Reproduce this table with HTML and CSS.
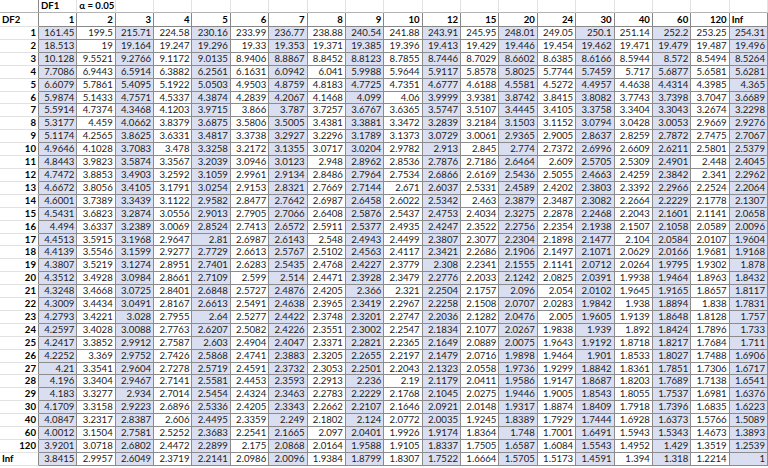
FILE: index.html
```html
<!DOCTYPE html>
<html>
<head>
<meta charset="utf-8">
<link rel="stylesheet" href="styles.css">
</head>
<body>
<div class="sheet">
<div class="row top"><div class="lb"></div><div class="tl">DF1</div><div class="tl">α = 0.05</div><div></div><div></div><div></div><div></div><div></div><div></div><div></div><div></div><div></div><div></div><div></div><div></div><div></div><div></div><div></div><div></div><div></div></div>
<div class="row hd"><div class="lb tl">DF2</div><div>1</div><div>2</div><div>3</div><div>4</div><div>5</div><div>6</div><div>7</div><div>8</div><div>9</div><div>10</div><div>12</div><div>15</div><div>20</div><div>24</div><div>30</div><div>40</div><div>60</div><div>120</div><div class="tl">Inf</div></div>
<div class="row d"><div class="lb">1</div><div>161.45</div><div>199.5</div><div>215.71</div><div>224.58</div><div>230.16</div><div>233.99</div><div>236.77</div><div>238.88</div><div>240.54</div><div>241.88</div><div>243.91</div><div>245.95</div><div>248.01</div><div>249.05</div><div>250.1</div><div>251.14</div><div>252.2</div><div>253.25</div><div>254.31</div></div>
<div class="row d"><div class="lb">2</div><div>18.513</div><div>19</div><div>19.164</div><div>19.247</div><div>19.296</div><div>19.33</div><div>19.353</div><div>19.371</div><div>19.385</div><div>19.396</div><div>19.413</div><div>19.429</div><div>19.446</div><div>19.454</div><div>19.462</div><div>19.471</div><div>19.479</div><div>19.487</div><div>19.496</div></div>
<div class="row d"><div class="lb">3</div><div>10.128</div><div>9.5521</div><div>9.2766</div><div>9.1172</div><div>9.0135</div><div>8.9406</div><div>8.8867</div><div>8.8452</div><div>8.8123</div><div>8.7855</div><div>8.7446</div><div>8.7029</div><div>8.6602</div><div>8.6385</div><div>8.6166</div><div>8.5944</div><div>8.572</div><div>8.5494</div><div>8.5264</div></div>
<div class="row d"><div class="lb">4</div><div>7.7086</div><div>6.9443</div><div>6.5914</div><div>6.3882</div><div>6.2561</div><div>6.1631</div><div>6.0942</div><div>6.041</div><div>5.9988</div><div>5.9644</div><div>5.9117</div><div>5.8578</div><div>5.8025</div><div>5.7744</div><div>5.7459</div><div>5.717</div><div>5.6877</div><div>5.6581</div><div>5.6281</div></div>
<div class="row d"><div class="lb">5</div><div>6.6079</div><div>5.7861</div><div>5.4095</div><div>5.1922</div><div>5.0503</div><div>4.9503</div><div>4.8759</div><div>4.8183</div><div>4.7725</div><div>4.7351</div><div>4.6777</div><div>4.6188</div><div>4.5581</div><div>4.5272</div><div>4.4957</div><div>4.4638</div><div>4.4314</div><div>4.3985</div><div>4.365</div></div>
<div class="row d"><div class="lb">6</div><div>5.9874</div><div>5.1433</div><div>4.7571</div><div>4.5337</div><div>4.3874</div><div>4.2839</div><div>4.2067</div><div>4.1468</div><div>4.099</div><div>4.06</div><div>3.9999</div><div>3.9381</div><div>3.8742</div><div>3.8415</div><div>3.8082</div><div>3.7743</div><div>3.7398</div><div>3.7047</div><div>3.6689</div></div>
<div class="row d"><div class="lb">7</div><div>5.5914</div><div>4.7374</div><div>4.3468</div><div>4.1203</div><div>3.9715</div><div>3.866</div><div>3.787</div><div>3.7257</div><div>3.6767</div><div>3.6365</div><div>3.5747</div><div>3.5107</div><div>3.4445</div><div>3.4105</div><div>3.3758</div><div>3.3404</div><div>3.3043</div><div>3.2674</div><div>3.2298</div></div>
<div class="row d"><div class="lb">8</div><div>5.3177</div><div>4.459</div><div>4.0662</div><div>3.8379</div><div>3.6875</div><div>3.5806</div><div>3.5005</div><div>3.4381</div><div>3.3881</div><div>3.3472</div><div>3.2839</div><div>3.2184</div><div>3.1503</div><div>3.1152</div><div>3.0794</div><div>3.0428</div><div>3.0053</div><div>2.9669</div><div>2.9276</div></div>
<div class="row d"><div class="lb">9</div><div>5.1174</div><div>4.2565</div><div>3.8625</div><div>3.6331</div><div>3.4817</div><div>3.3738</div><div>3.2927</div><div>3.2296</div><div>3.1789</div><div>3.1373</div><div>3.0729</div><div>3.0061</div><div>2.9365</div><div>2.9005</div><div>2.8637</div><div>2.8259</div><div>2.7872</div><div>2.7475</div><div>2.7067</div></div>
<div class="row d"><div class="lb">10</div><div>4.9646</div><div>4.1028</div><div>3.7083</div><div>3.478</div><div>3.3258</div><div>3.2172</div><div>3.1355</div><div>3.0717</div><div>3.0204</div><div>2.9782</div><div>2.913</div><div>2.845</div><div>2.774</div><div>2.7372</div><div>2.6996</div><div>2.6609</div><div>2.6211</div><div>2.5801</div><div>2.5379</div></div>
<div class="row d"><div class="lb">11</div><div>4.8443</div><div>3.9823</div><div>3.5874</div><div>3.3567</div><div>3.2039</div><div>3.0946</div><div>3.0123</div><div>2.948</div><div>2.8962</div><div>2.8536</div><div>2.7876</div><div>2.7186</div><div>2.6464</div><div>2.609</div><div>2.5705</div><div>2.5309</div><div>2.4901</div><div>2.448</div><div>2.4045</div></div>
<div class="row d"><div class="lb">12</div><div>4.7472</div><div>3.8853</div><div>3.4903</div><div>3.2592</div><div>3.1059</div><div>2.9961</div><div>2.9134</div><div>2.8486</div><div>2.7964</div><div>2.7534</div><div>2.6866</div><div>2.6169</div><div>2.5436</div><div>2.5055</div><div>2.4663</div><div>2.4259</div><div>2.3842</div><div>2.341</div><div>2.2962</div></div>
<div class="row d"><div class="lb">13</div><div>4.6672</div><div>3.8056</div><div>3.4105</div><div>3.1791</div><div>3.0254</div><div>2.9153</div><div>2.8321</div><div>2.7669</div><div>2.7144</div><div>2.671</div><div>2.6037</div><div>2.5331</div><div>2.4589</div><div>2.4202</div><div>2.3803</div><div>2.3392</div><div>2.2966</div><div>2.2524</div><div>2.2064</div></div>
<div class="row d"><div class="lb">14</div><div>4.6001</div><div>3.7389</div><div>3.3439</div><div>3.1122</div><div>2.9582</div><div>2.8477</div><div>2.7642</div><div>2.6987</div><div>2.6458</div><div>2.6022</div><div>2.5342</div><div>2.463</div><div>2.3879</div><div>2.3487</div><div>2.3082</div><div>2.2664</div><div>2.2229</div><div>2.1778</div><div>2.1307</div></div>
<div class="row d"><div class="lb">15</div><div>4.5431</div><div>3.6823</div><div>3.2874</div><div>3.0556</div><div>2.9013</div><div>2.7905</div><div>2.7066</div><div>2.6408</div><div>2.5876</div><div>2.5437</div><div>2.4753</div><div>2.4034</div><div>2.3275</div><div>2.2878</div><div>2.2468</div><div>2.2043</div><div>2.1601</div><div>2.1141</div><div>2.0658</div></div>
<div class="row d"><div class="lb">16</div><div>4.494</div><div>3.6337</div><div>3.2389</div><div>3.0069</div><div>2.8524</div><div>2.7413</div><div>2.6572</div><div>2.5911</div><div>2.5377</div><div>2.4935</div><div>2.4247</div><div>2.3522</div><div>2.2756</div><div>2.2354</div><div>2.1938</div><div>2.1507</div><div>2.1058</div><div>2.0589</div><div>2.0096</div></div>
<div class="row d"><div class="lb">17</div><div>4.4513</div><div>3.5915</div><div>3.1968</div><div>2.9647</div><div>2.81</div><div>2.6987</div><div>2.6143</div><div>2.548</div><div>2.4943</div><div>2.4499</div><div>2.3807</div><div>2.3077</div><div>2.2304</div><div>2.1898</div><div>2.1477</div><div>2.104</div><div>2.0584</div><div>2.0107</div><div>1.9604</div></div>
<div class="row d"><div class="lb">18</div><div>4.4139</div><div>3.5546</div><div>3.1599</div><div>2.9277</div><div>2.7729</div><div>2.6613</div><div>2.5767</div><div>2.5102</div><div>2.4563</div><div>2.4117</div><div>2.3421</div><div>2.2686</div><div>2.1906</div><div>2.1497</div><div>2.1071</div><div>2.0629</div><div>2.0166</div><div>1.9681</div><div>1.9168</div></div>
<div class="row d"><div class="lb">19</div><div>4.3807</div><div>3.5219</div><div>3.1274</div><div>2.8951</div><div>2.7401</div><div>2.6283</div><div>2.5435</div><div>2.4768</div><div>2.4227</div><div>2.3779</div><div>2.308</div><div>2.2341</div><div>2.1555</div><div>2.1141</div><div>2.0712</div><div>2.0264</div><div>1.9795</div><div>1.9302</div><div>1.878</div></div>
<div class="row d"><div class="lb">20</div><div>4.3512</div><div>3.4928</div><div>3.0984</div><div>2.8661</div><div>2.7109</div><div>2.599</div><div>2.514</div><div>2.4471</div><div>2.3928</div><div>2.3479</div><div>2.2776</div><div>2.2033</div><div>2.1242</div><div>2.0825</div><div>2.0391</div><div>1.9938</div><div>1.9464</div><div>1.8963</div><div>1.8432</div></div>
<div class="row d"><div class="lb">21</div><div>4.3248</div><div>3.4668</div><div>3.0725</div><div>2.8401</div><div>2.6848</div><div>2.5727</div><div>2.4876</div><div>2.4205</div><div>2.366</div><div>2.321</div><div>2.2504</div><div>2.1757</div><div>2.096</div><div>2.054</div><div>2.0102</div><div>1.9645</div><div>1.9165</div><div>1.8657</div><div>1.8117</div></div>
<div class="row d"><div class="lb">22</div><div>4.3009</div><div>3.4434</div><div>3.0491</div><div>2.8167</div><div>2.6613</div><div>2.5491</div><div>2.4638</div><div>2.3965</div><div>2.3419</div><div>2.2967</div><div>2.2258</div><div>2.1508</div><div>2.0707</div><div>2.0283</div><div>1.9842</div><div>1.938</div><div>1.8894</div><div>1.838</div><div>1.7831</div></div>
<div class="row d"><div class="lb">23</div><div>4.2793</div><div>3.4221</div><div>3.028</div><div>2.7955</div><div>2.64</div><div>2.5277</div><div>2.4422</div><div>2.3748</div><div>2.3201</div><div>2.2747</div><div>2.2036</div><div>2.1282</div><div>2.0476</div><div>2.005</div><div>1.9605</div><div>1.9139</div><div>1.8648</div><div>1.8128</div><div>1.757</div></div>
<div class="row d"><div class="lb">24</div><div>4.2597</div><div>3.4028</div><div>3.0088</div><div>2.7763</div><div>2.6207</div><div>2.5082</div><div>2.4226</div><div>2.3551</div><div>2.3002</div><div>2.2547</div><div>2.1834</div><div>2.1077</div><div>2.0267</div><div>1.9838</div><div>1.939</div><div>1.892</div><div>1.8424</div><div>1.7896</div><div>1.733</div></div>
<div class="row d"><div class="lb">25</div><div>4.2417</div><div>3.3852</div><div>2.9912</div><div>2.7587</div><div>2.603</div><div>2.4904</div><div>2.4047</div><div>2.3371</div><div>2.2821</div><div>2.2365</div><div>2.1649</div><div>2.0889</div><div>2.0075</div><div>1.9643</div><div>1.9192</div><div>1.8718</div><div>1.8217</div><div>1.7684</div><div>1.711</div></div>
<div class="row d"><div class="lb">26</div><div>4.2252</div><div>3.369</div><div>2.9752</div><div>2.7426</div><div>2.5868</div><div>2.4741</div><div>2.3883</div><div>2.3205</div><div>2.2655</div><div>2.2197</div><div>2.1479</div><div>2.0716</div><div>1.9898</div><div>1.9464</div><div>1.901</div><div>1.8533</div><div>1.8027</div><div>1.7488</div><div>1.6906</div></div>
<div class="row d"><div class="lb">27</div><div>4.21</div><div>3.3541</div><div>2.9604</div><div>2.7278</div><div>2.5719</div><div>2.4591</div><div>2.3732</div><div>2.3053</div><div>2.2501</div><div>2.2043</div><div>2.1323</div><div>2.0558</div><div>1.9736</div><div>1.9299</div><div>1.8842</div><div>1.8361</div><div>1.7851</div><div>1.7306</div><div>1.6717</div></div>
<div class="row d"><div class="lb">28</div><div>4.196</div><div>3.3404</div><div>2.9467</div><div>2.7141</div><div>2.5581</div><div>2.4453</div><div>2.3593</div><div>2.2913</div><div>2.236</div><div>2.19</div><div>2.1179</div><div>2.0411</div><div>1.9586</div><div>1.9147</div><div>1.8687</div><div>1.8203</div><div>1.7689</div><div>1.7138</div><div>1.6541</div></div>
<div class="row d"><div class="lb">29</div><div>4.183</div><div>3.3277</div><div>2.934</div><div>2.7014</div><div>2.5454</div><div>2.4324</div><div>2.3463</div><div>2.2783</div><div>2.2229</div><div>2.1768</div><div>2.1045</div><div>2.0275</div><div>1.9446</div><div>1.9005</div><div>1.8543</div><div>1.8055</div><div>1.7537</div><div>1.6981</div><div>1.6376</div></div>
<div class="row d"><div class="lb">30</div><div>4.1709</div><div>3.3158</div><div>2.9223</div><div>2.6896</div><div>2.5336</div><div>2.4205</div><div>2.3343</div><div>2.2662</div><div>2.2107</div><div>2.1646</div><div>2.0921</div><div>2.0148</div><div>1.9317</div><div>1.8874</div><div>1.8409</div><div>1.7918</div><div>1.7396</div><div>1.6835</div><div>1.6223</div></div>
<div class="row d"><div class="lb">40</div><div>4.0847</div><div>3.2317</div><div>2.8387</div><div>2.606</div><div>2.4495</div><div>2.3359</div><div>2.249</div><div>2.1802</div><div>2.124</div><div>2.0772</div><div>2.0035</div><div>1.9245</div><div>1.8389</div><div>1.7929</div><div>1.7444</div><div>1.6928</div><div>1.6373</div><div>1.5766</div><div>1.5089</div></div>
<div class="row d"><div class="lb">60</div><div>4.0012</div><div>3.1504</div><div>2.7581</div><div>2.5252</div><div>2.3683</div><div>2.2541</div><div>2.1665</div><div>2.097</div><div>2.0401</div><div>1.9926</div><div>1.9174</div><div>1.8364</div><div>1.748</div><div>1.7001</div><div>1.6491</div><div>1.5943</div><div>1.5343</div><div>1.4673</div><div>1.3893</div></div>
<div class="row d"><div class="lb">120</div><div>3.9201</div><div>3.0718</div><div>2.6802</div><div>2.4472</div><div>2.2899</div><div>2.175</div><div>2.0868</div><div>2.0164</div><div>1.9588</div><div>1.9105</div><div>1.8337</div><div>1.7505</div><div>1.6587</div><div>1.6084</div><div>1.5543</div><div>1.4952</div><div>1.429</div><div>1.3519</div><div>1.2539</div></div>
<div class="row d"><div class="lb tl">Inf</div><div>3.8415</div><div>2.9957</div><div>2.6049</div><div>2.3719</div><div>2.2141</div><div>2.0986</div><div>2.0096</div><div>1.9384</div><div>1.8799</div><div>1.8307</div><div>1.7522</div><div>1.6664</div><div>1.5705</div><div>1.5173</div><div>1.4591</div><div>1.394</div><div>1.318</div><div>1.2214</div><div>1</div></div>
</div>
</body>
</html>
```
FILE: styles.css
```css
* { box-sizing: border-box; }
html, body { margin: 0; padding: 0; background: #fff; }
body {
  font-family: Lato, "Open Sans", "Liberation Sans", sans-serif;
  font-size: 9.6px;
  color: #1c1c1c;
  width: 768px;
  height: 468px;
  overflow: hidden;
}
.sheet { display: flex; flex-direction: column; width: 768px; }
.row {
  display: grid;
  grid-template-columns: 39px repeat(19, minmax(0, 1fr));
  height: 12.92px;
}
.row > div {
  text-align: right;
  padding: 0 2px 0 2px;
  white-space: nowrap;
  overflow: hidden;
  line-height: 12px;
  border-right: 1px solid #e2e2e2;
  border-bottom: 1px solid #e2e2e2;
}
.row > div.tl { text-align: left; }
.top { height: 13px; }
.top > div { font-weight: bold; color: #000; border-bottom-color: #b4b4b4; }
.hd { height: 14px; }
.hd > div { font-weight: bold; color: #000; line-height: 13px; }
.hd > div:not(.lb) { border-right-color: #888; border-bottom-color: #888; }
.lb { font-weight: bold; color: #000; }
.row > .lb { border-right-color: #888; }
.d > div:not(.lb) { border-right-color: #8c8c8c; border-bottom-color: #8c8c8c; }
.d > div:nth-child(even) { background: #d9def0; }
```
